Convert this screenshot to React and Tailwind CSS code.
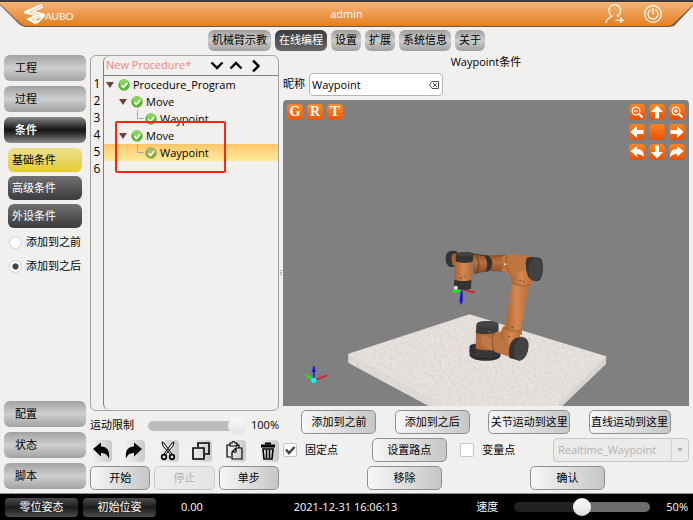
import React, { useState } from "react";

const topTabs = ["机械臂示教", "在线编程", "设置", "扩展", "系统信息", "关于"];

const SideButton = ({ label, active }) => (
  <button
    className={`h-[26px] w-full rounded-md pl-[11px] text-left ${
      active
        ? "bg-linear-to-b from-[#8c8c8c] via-[#141414] to-[#8c8c8c] font-bold text-white"
        : "bg-linear-to-b from-[#a2a2a2] via-[#cfcfcf] to-[#a2a2a2]"
    }`}
  >
    {label}
  </button>
);

const SubButton = ({ label, active }) => (
  <button
    className={`h-6 rounded-md pl-1 text-left ${
      active
        ? "bg-linear-to-b from-[#ebe08c] to-[#e4cd25]"
        : "bg-linear-to-b from-[#717173] to-[#3c3c3e] text-white"
    }`}
  >
    {label}
  </button>
);

const ActionButton = ({ label, className = "", disabled = false }) => (
  <button
    disabled={disabled}
    className={`h-6 rounded-[5px] border border-[#8f8f8b] bg-linear-to-r from-[#f7f7f7] to-[#c6c6c6] text-center whitespace-nowrap disabled:border-[#c9c9c7] disabled:from-[#eeeeed] disabled:to-[#e4e4e3] disabled:text-[#b4b4b2] ${className}`}
  >
    {label}
  </button>
);

const Logo = () => (
  <svg viewBox="0 0 62 66" className="h-[22px] w-[21px]" fill="none">
    <path d="M55 8L12 27L50 36L20 49L38 59" stroke="white" strokeWidth="13" />
    <path d="M48 36L58 40L38 60" stroke="white" strokeWidth="6" />
    <path d="M55 9L16 27L44 35M45 39L24 49L35 56" stroke="#f0a35a" strokeWidth="2" />
  </svg>
);

const Header = () => (
  <header className="relative h-[27px] border-t-2 border-[#3f3d3a]">
    <div className="absolute inset-0 bg-[#6b5a48] [clip-path:polygon(0_0,100%_0,100%_4px,calc(100%-19px)_24px,calc(100%-24px)_100%,25px_100%,20px_23px,0_3px)]">
      <div className="h-6 bg-linear-to-b from-[#f6b473] to-[#e47f1c] [clip-path:polygon(0_0,100%_0,100%_3px,calc(100%-20px)_22px,calc(100%-24px)_100%,25px_100%,21px_22px,0_2px)]" />
    </div>
    <div className="relative grid h-6 grid-cols-3 items-center text-white">
      <div className="flex items-center pl-6">
        <Logo />
        <span className="pt-1 font-['Lato'] text-[10px] leading-3">AUBO</span>
      </div>
      <span className="text-center">admin</span>
      <div className="flex justify-end gap-[18px] pr-[30px]">
        <button aria-label="切换用户">
          <svg viewBox="0 0 20 20" className="h-5 w-5" fill="none" stroke="white" strokeWidth="1.2">
            <path d="M7.3 12.2C4.4 10.8 3.8 8.3 3.8 6.3a5.9 5.6 0 0 1 11.8 0c0 2.6-1.5 4.5-3.3 5.5l1.4 1.2M7.3 12.2C3 13.7 1.5 15.5 1 19M10.5 16.3h7M15 13.8l3 2.5-3 2.5" />
          </svg>
        </button>
        <button aria-label="关机">
          <svg viewBox="0 0 20 20" className="h-5 w-5" fill="none" stroke="white">
            <circle cx="10" cy="10" r="8.3" strokeWidth="1.2" />
            <path d="M7.5 5.7a5 5 0 1 0 5 0M10 4v6.5" strokeWidth="1.3" />
          </svg>
        </button>
      </div>
    </div>
  </header>
);

const CheckDot = ({ faded }) => (
  <svg viewBox="0 0 12 12" className="h-3 w-3">
    <circle cx="6" cy="6" r="5.7" fill={faded ? "#8fa83c" : "#55b82c"} />
    <ellipse cx="6" cy="3.6" rx="4.3" ry="3" fill={faded ? "#b0b865" : "#8ad45e"} />
    <path d="M3.2 6.2l2.2 2.3 3.8-4.4" fill="none" stroke="white" strokeWidth="1.7" />
  </svg>
);

const Arrow = () => (
  <svg viewBox="0 0 8 6" className="h-[6px] w-2">
    <path d="M0 0h8L4 6z" fill="#6b443c" />
  </svg>
);

const Elbow = () => (
  <svg viewBox="0 0 8 17" className="h-[17px] w-2" fill="none" stroke="#a9a9a7">
    <path d="M1.5 0v8.5H8" />
  </svg>
);

const rows = [
  { label: "Procedure_Program", depth: 0 },
  { label: "Move", depth: 1 },
  { label: "Waypoint", depth: 2 },
  { label: "Move", depth: 1 },
  { label: "Waypoint", depth: 2, selected: true },
];

const indents = ["pl-[2px]", "pl-[15px]", "pl-8"];

const moves = [
  { name: "下移", d: "M1.5 3.5L7 9l5.500-5.500" },
  { name: "上移", d: "M1.5 9.5L7 4l5.500 5.500" },
  { name: "展开", d: "M5 1.5L10.5 7 5 12.5" },
];

const ProcedureTree = () => (
  <div className="relative flex flex-1 rounded-md border border-[#a3a3a1]">
    <ol className="w-3 pt-[19px] text-center text-xs">
      {[1, 2, 3, 4, 5, 6].map((n) => (
        <li key={n} className="h-[17px] leading-[17px]">
          {n}
        </li>
      ))}
    </ol>
    <div className="flex-1 rounded-md border-l border-[#80807e]">
      <div className="flex h-5 items-center border-b border-[#80807e] pr-4 pl-[2px]">
        <span className="flex-1 text-[#f78383]">New Procedure*</span>
        <div className="flex gap-[5px]">
          {moves.map(({ name, d }) => (
            <button key={name} aria-label={name}>
              <svg viewBox="0 0 14 14" className="h-[14px] w-[14px]" fill="none" stroke="black" strokeWidth="2.4">
                <path d={d} />
              </svg>
            </button>
          ))}
        </div>
      </div>
      <div className="relative">
        {rows.map(({ label, depth, selected }, i) => (
          <div
            key={i}
            className={`flex h-[17px] items-center ${indents[depth]} ${
              selected ? "bg-linear-to-b from-[#fdc56a] via-[#fed986] to-[#feea94]" : ""
            }`}
          >
            {depth === 2 ? <Elbow /> : <Arrow />}
            <span className={depth === 2 ? "mr-[3px] ml-px" : "mr-[3px] ml-1"}>
              <CheckDot faded={selected} />
            </span>
            <span className="leading-4">{label}</span>
          </div>
        ))}
        <div className="absolute top-[45px] left-[11px] h-[52px] w-[111px] rounded-xs border-2 border-[#ff2412]" />
      </div>
    </div>
    {/* splitter grip */}
    <div className="absolute top-[214px] -right-1 flex flex-col gap-px">
      <i className="h-px w-[2px] bg-[#aaa]" />
      <i className="h-px w-[2px] bg-[#aaa]" />
      <i className="h-px w-[2px] bg-[#aaa]" />
    </div>
  </div>
);

const curvedArrow = "M3 9L11 2.5v4c6 0 9 4 8 12.5-1-4-4-6-8-6v3.5z";

const tools = [
  {
    name: "撤销",
    icon: <path d={curvedArrow} fill="black" />,
  },
  {
    name: "重做",
    icon: <path d={curvedArrow} fill="black" transform="matrix(-1 0 0 1 22 0)" />,
  },
  {
    name: "剪切",
    icon: (
      <g fill="none" stroke="black">
        <path d="M5 2l1 4 8 9 1-1L7 3zM17 2l-1 4-8 9-1-1 8-11z" fill="#eee" />
        <circle cx="7" cy="17" r="2.3" strokeWidth="1.7" />
        <circle cx="15" cy="17" r="2.3" strokeWidth="1.7" />
      </g>
    ),
  },
  {
    name: "复制",
    icon: (
      <path d="M8 7V3h11v11h-4M3 8h11v11H3z" fill="none" stroke="black" strokeWidth="1.6" />
    ),
  },
  {
    name: "粘贴",
    icon: (
      <g fill="none" stroke="black" strokeWidth="1.2">
        <path d="M7 17H3V5h3M12 5h3v3M6 3h2c0-2 3-2 3 0h2v3H6z" />
        <path d="M12 8h6v11H8v-7zM12 8v4H8" />
      </g>
    ),
  },
  {
    name: "删除",
    icon: (
      <g fill="none" stroke="black">
        <path d="M4 6h14" strokeWidth="3" />
        <path d="M8 3.5h6" strokeWidth="2" />
        <path d="M6 9l1 10h8l1-10zM9.5 10v8M12.5 10v8" strokeWidth="1.6" />
      </g>
    ),
  },
];

const thumb =
  "[&::-webkit-slider-thumb]:h-[18px] [&::-webkit-slider-thumb]:w-[18px] [&::-webkit-slider-thumb]:appearance-none [&::-webkit-slider-thumb]:rounded-full [&::-webkit-slider-thumb]:bg-linear-to-b";

const EditorColumn = () => (
  <section className="flex w-[189px] shrink-0 flex-col">
    <ProcedureTree />
    <div className="flex h-[29px] items-center">
      <label htmlFor="limit" className="w-[58px] shrink-0">
        运动限制
      </label>
      <input
        id="limit"
        type="range"
        defaultValue="100"
        className={`mr-1 h-[10px] w-[98px] appearance-none rounded-full bg-[#bdbdbd] [&::-webkit-slider-thumb]:from-[#fafafa] [&::-webkit-slider-thumb]:to-[#e2e2e2] ${thumb}`}
      />
      <span className="flex-1 text-right">100%</span>
    </div>
    <div className="mb-1 flex justify-between">
      {tools.map(({ name, icon }) => (
        <button
          key={name}
          aria-label={name}
          className="rounded-sm bg-linear-to-r from-[#f4f4f3] to-[#c9c9c9]"
        >
          <svg viewBox="0 0 22 22" className="h-[22px] w-[22px]">
            {icon}
          </svg>
        </button>
      ))}
    </div>
    <div className="grid grid-cols-3 gap-1">
      <ActionButton label="开始" />
      <ActionButton label="停止" disabled />
      <ActionButton label="单步" />
    </div>
  </section>
);

const Robot = () => (
  <svg
    viewBox="-171 -390 1221 918"
    preserveAspectRatio="xMidYMid slice"
    className="absolute inset-0 h-full w-full"
  >
    <defs>
      <filter id="grain" x="0" y="0" width="100%" height="100%">
        <feTurbulence type="fractalNoise" baseFrequency="0.12" numOctaves="2" seed="4" />
        <feColorMatrix values="0 0 0 0 .5  0 0 0 0 .46  0 0 0 0 .44  .7 0 0 0 -.27" />
        <feComposite in2="SourceGraphic" operator="in" result="noise" />
        <feMerge>
          <feMergeNode in="SourceGraphic" />
          <feMergeNode in="noise" />
        </feMerge>
      </filter>
      <linearGradient id="tube" x1="0" x2="1" y1="0" y2="0">
        <stop offset="0" stopColor="#a9632f" />
        <stop offset=".5" stopColor="#d68850" />
        <stop offset="1" stopColor="#b46c38" />
      </linearGradient>
      <linearGradient id="tubeDown" x1="0" x2="0" y1="0" y2="1">
        <stop offset="0" stopColor="#8f5228" />
        <stop offset=".4" stopColor="#b97040" />
        <stop offset="1" stopColor="#7c4724" />
      </linearGradient>
    </defs>

    {/* table */}
    <g filter="url(#grain)">
      <path d="M390 253L800 379L798 403L650 545H300L27 398V371z" fill="#e8e2df" />
      <path d="M27 371V398L300 545H345z" fill="#e2dcd8" />
      <path d="M800 379L798 403L650 545H635z" fill="#dcd6d1" />
    </g>

    {/* base */}
    <path d="M390 350C390 335 482 335 483 362V378C480 398 394 398 390 374z" fill="#2e2e2e" />
    <path d="M390 362C396 384 476 386 483 366" fill="none" stroke="#454545" strokeWidth="3" />
    <path d="M404 350L407 370C420 380 455 379 466 370V350z" fill="#383838" />
    <path d="M409 303H475V350C465 363 420 363 409 355z" fill="#b06a38" />
    <path d="M425 315L475 330V350L455 362L425 345z" fill="#c0774a" />
    <path d="M411 282C413 270 474 270 477 282V302C472 314 418 314 409 308z" fill="#3b3b3b" />
    <ellipse cx="444" cy="282" rx="32" ry="9" fill="#454545" />

    {/* shoulder */}
    <path d="M470 305C452 310 452 360 466 366L512 381L548 330L500 304z" fill="#bd7441" />
    <path d="M470 305C456 315 454 350 466 366" fill="none" stroke="#6d4021" strokeWidth="2" />
    <path d="M482 318C488 298 486 290 496 288L538 291C550 297 548 312 547 322L510 346z" fill="url(#tube)" />
    <path d="M527 325C547 318 564 322 567 340C567 368 556 389 541 392L510 384C505 360 510 336 527 325z" fill="#343434" />
    <ellipse cx="545" cy="357" rx="21" ry="35" fill="#434343" transform="rotate(12 545 357)" />

    {/* upper arm */}
    <path d="M518 155L570 160L544 298C530 306 504 303 496 296z" fill="url(#tube)" />
    <path d="M496 294C508 305 534 307 545 297" fill="none" stroke="#965b32" strokeWidth="2" />

    {/* forearm */}
    <path d="M398 74L452 76L500 74L510 125L450 123L402 132z" fill="url(#tubeDown)" />
    <path d="M412 80C420 95 420 115 411 130" fill="none" stroke="#42291a" strokeWidth="2" />
    <path d="M432 75L448 78C462 88 462 112 447 123L436 126C446 110 446 90 432 75z" fill="#333" />
    <path d="M400 72L445 78" stroke="#47321f" strokeWidth="3" />

    {/* elbow */}
    <path d="M485 84C500 70 540 70 575 80L582 155L572 166C555 171 530 167 516 158V139C505 128 490 126 484 121C494 108 494 98 485 84z" fill="#bf7540" />
    <path d="M503 78C496 95 500 118 514 134" fill="none" stroke="#7b4925" strokeWidth="2" />
    <path d="M514 137C530 125 545 120 560 124L577 154L572 166C552 172 530 166 516 158z" fill="url(#tube)" />
    <path d="M520 160C538 168 558 170 573 162" fill="none" stroke="#8f552c" strokeWidth="2" />
    <path d="M562 83C575 79 600 80 606 88C614 105 611 137 599 152C585 155 572 149 566 139C558 120 557 96 562 83z" fill="#353535" />
    <ellipse cx="588" cy="118" rx="21" ry="35" fill="#424242" transform="rotate(8 588 118)" />

    {/* wrist */}
    <path d="M326 66C336 60 350 62 354 66V110L332 111C316 105 314 76 326 66z" fill="#333" />
    <path d="M338 73L352 70V108L342 108C336 98 335 84 338 73z" fill="#a8632f" />
    <path d="M347 92H398L396 155H345z" fill="url(#tube)" />
    <path d="M349 72C357 64 396 64 402 71L400 94C388 101 360 100 349 94z" fill="#333" />
    <ellipse cx="376" cy="73" rx="26" ry="6" fill="#424242" />
    <path d="M344 149C360 154 382 154 396 150L394 177C380 182 352 180 343 174z" fill="#333" />
    <g fill="#3a2416">
      <circle cx="374" cy="139" r="2" />
      <circle cx="364" cy="144" r="2" />
      <circle cx="542" cy="152" r="2" />
      <circle cx="552" cy="154" r="2" />
      <circle cx="518" cy="292" r="2" />
      <circle cx="508" cy="319" r="2" />
      <circle cx="436" cy="307" r="2" />
    </g>
    <circle cx="450" cy="305" r="2" fill="#e48b4a" />
    <circle cx="497" cy="103" r="3" fill="white" />
    <circle cx="544" cy="317" r="3" fill="white" />

    {/* tool axes */}
    <path d="M335 184L347 178L366 180V184L349 188z" fill="#0f0" />
    <path d="M371 179L406 184L405 190L384 185z" fill="#e11" />
    <path d="M363 181h8" stroke="#d0d" strokeWidth="3" />
    <path d="M364 183H369L370 213L365 226L360 213z" fill="#1111e8" />
    <circle cx="349" cy="173" r="6" fill="#eee" />

    {/* world axes */}
    <path d="M-77 452V410" stroke="#1111e8" strokeWidth="4" />
    <path d="M-83 426L-77 405L-71 426z" fill="#1111e8" />
    <path d="M-77 450L-102 435" stroke="#0f0" strokeWidth="5" />
    <path d="M-72 450L-37 436" stroke="#e11" strokeWidth="5" />
    <circle cx="-77" cy="451" r="8" fill="#0ff" />
  </svg>
);

const straightArrow = "M1.5 8L8 2v4h6.5v4H8v4z";
const bentArrow = "M1.5 7L8 2v3c5 0 7 3 7 8-2-2-4-3-7-3v3z";

const zoomGlyph = (plus) => (
  <g fill="none" stroke="white">
    <circle cx="7" cy="7" r="3.8" strokeWidth="1.3" />
    <path d="M10 10l3.5 3.5" strokeWidth="2" />
    <path d={plus ? "M5 7h4M7 5v4" : "M5 7h4"} strokeWidth="1.2" />
  </g>
);

const viewControls = [
  { name: "缩小", icon: zoomGlyph(false) },
  { name: "上", icon: <path d={straightArrow} transform="rotate(90 8 8)" /> },
  { name: "放大", icon: zoomGlyph(true) },
  { name: "左", icon: <path d={straightArrow} /> },
  { name: "复位", icon: null },
  { name: "右", icon: <path d={straightArrow} transform="rotate(180 8 8)" /> },
  { name: "左转", icon: <path d={bentArrow} /> },
  { name: "下", icon: <path d={straightArrow} transform="rotate(270 8 8)" /> },
  { name: "右转", icon: <path d={bentArrow} transform="matrix(-1 0 0 1 16 0)" /> },
];

const RobotView = () => (
  <div className="relative flex-1 overflow-hidden rounded-t-sm bg-[#808080]">
    <Robot />
    <div className="absolute top-1 left-1 flex gap-1">
      {["G", "R", "T"].map((letter) => (
        <button
          key={letter}
          className="h-4 w-4 rounded-sm bg-linear-to-b from-[#f98c26] to-[#ee5507] text-center font-['Liberation_Serif'] text-sm leading-4 font-bold text-white"
        >
          {letter}
        </button>
      ))}
    </div>
    <div className="absolute top-1 right-1 grid grid-cols-3 gap-1">
      {viewControls.map(({ name, icon }) => (
        <button
          key={name}
          aria-label={name}
          className="h-4 w-4 rounded-sm bg-linear-to-b from-[#f98422] to-[#ea4f04]"
        >
          <svg viewBox="0 0 16 16" className="h-4 w-4" fill="white">
            {icon}
          </svg>
        </button>
      ))}
    </div>
  </div>
);

const Check = ({ label, checked = false }) => (
  <label className="flex items-center gap-2">
    <span className="relative flex h-[14px] w-[14px]">
      <input
        type="checkbox"
        defaultChecked={checked}
        className="peer h-[14px] w-[14px] appearance-none rounded-xs border border-[#c4c4c2] bg-white"
      />
      <svg
        viewBox="0 0 14 14"
        className="pointer-events-none absolute inset-0 hidden peer-checked:block"
        fill="none"
        stroke="#444"
        strokeWidth="2.5"
      >
        <path d="M3 6.5l3 3.5 5.500-6" />
      </svg>
    </span>
    {label}
  </label>
);

const WaypointPanel = () => {
  const [name, setName] = useState("Waypoint");

  return (
    <section className="flex flex-1 flex-col">
      <h1 className="h-[18px] text-center leading-[14px]">Waypoint条件</h1>
      <div className="mb-1 flex items-center gap-1">
        <label htmlFor="nickname">昵称</label>
        <div className="relative flex">
          <input
            id="nickname"
            value={name}
            onChange={(e) => setName(e.target.value)}
            className="h-[23px] w-[134px] rounded-sm border border-[#b5b5b3] bg-white pr-4 pl-[2px]"
          />
          <button
            aria-label="清除"
            className="absolute top-2 right-1"
            onClick={() => setName("")}
          >
            <svg viewBox="0 0 10 8" className="h-2 w-[10px]" fill="none" stroke="#555">
              <path d="M3 .5h6.5v7H3L.5 4zM4 2l4 4M8 2L4 6" />
            </svg>
          </button>
        </div>
      </div>
      <RobotView />
      <div className="mt-1 flex justify-evenly">
        <ActionButton label="添加到之前" className="w-[75px]" />
        <ActionButton label="添加到之后" className="w-[75px]" />
        <ActionButton label="关节运动到这里" className="w-[82px]" />
        <ActionButton label="直线运动到这里" className="w-[82px]" />
      </div>
      <div className="mt-1 flex items-center justify-between">
        <Check label="固定点" checked />
        <ActionButton label="设置路点" className="ml-5 w-[75px]" />
        <Check label="变量点" />
        <div className="relative ml-6 flex">
          <select
            disabled
            aria-label="变量"
            className="h-6 w-[136px] appearance-none rounded-sm border border-[#c6c6c4] bg-[#ebebea] pl-1 text-[#b3b3b1]"
          >
            <option>Realtime_Waypoint</option>
          </select>
          <span className="pointer-events-none absolute inset-y-0 right-0 flex w-[18px] items-center justify-center border-l border-[#d2d2d0]">
            <svg viewBox="0 0 6 4" className="h-1 w-[6px]">
              <path d="M0 0h6L3 4z" fill="#b0b0ae" />
            </svg>
          </span>
        </div>
      </div>
      <div className="mt-1 flex justify-around px-10">
        <ActionButton label="移除" className="w-[75px]" />
        <ActionButton label="确认" className="w-[75px]" />
      </div>
    </section>
  );
};

const Sidebar = () => {
  const [position, setPosition] = useState("添加到之后");

  return (
    <aside className="flex w-[82px] shrink-0 flex-col justify-between pb-px">
      <div className="flex flex-col gap-[5px]">
        <SideButton label="工程" />
        <SideButton label="过程" />
        <SideButton label="条件" active />
        <div className="flex flex-col gap-1 px-1">
          <SubButton label="基础条件" active />
          <SubButton label="高级条件" />
          <SubButton label="外设条件" />
          {["添加到之前", "添加到之后"].map((option) => (
            <label key={option} className="flex h-5 items-center gap-1 pl-px">
              <input
                type="radio"
                name="position"
                checked={position === option}
                onChange={() => setPosition(option)}
                className="h-[13px] w-[13px] shrink-0 appearance-none rounded-full border border-[#cfcfcd] bg-white checked:bg-radial checked:from-[#444] checked:from-35% checked:to-white checked:to-45%"
              />
              <span className="whitespace-nowrap">{option}</span>
            </label>
          ))}
        </div>
      </div>
      <div className="flex flex-col gap-[5px]">
        <SideButton label="配置" />
        <SideButton label="状态" />
        <SideButton label="脚本" />
      </div>
    </aside>
  );
};

const Footer = () => (
  <footer className="flex h-[27px] items-center border-t border-[#8b938c] bg-black px-[5px] text-white">
    <div className="flex gap-[5px]">
      {["零位姿态", "初始位姿"].map((label) => (
        <button
          key={label}
          className="h-[19px] w-[73px] rounded-sm bg-linear-to-b from-[#4c4c4c] via-[#1c1c1c] to-[#4c4c4c]"
        >
          {label}
        </button>
      ))}
    </div>
    <span className="ml-[25px]">0.00</span>
    <span className="flex-1 pl-3 text-center">2021-12-31 16:06:13</span>
    <label htmlFor="speed" className="mr-4">
      速度
    </label>
    <input
      id="speed"
      type="range"
      defaultValue="50"
      className={`h-[10px] w-[136px] appearance-none rounded-full bg-linear-to-r from-[#222] from-50% to-[#6c6c6c] to-50% [&::-webkit-slider-thumb]:from-white [&::-webkit-slider-thumb]:to-[#ddd] ${thumb}`}
    />
    <span className="ml-4">50%</span>
  </footer>
);

const App = () => {
  const [tab, setTab] = useState("在线编程");

  return (
    <div className="flex min-h-screen flex-col bg-[#f1f0ee] font-['Open_Sans','Noto_Sans_CJK_SC',sans-serif] text-[11px] text-black">
      <Header />
      <nav className="mt-[3px] mb-1 flex justify-center gap-1">
        {topTabs.map((label) => (
          <button
            key={label}
            onClick={() => setTab(label)}
            className={`h-[21px] rounded-md px-1 ${
              tab === label
                ? "bg-linear-to-b from-[#3c3c3c] to-[#686868] text-white"
                : "bg-linear-to-b from-[#a0a0a0] via-[#cccccc] to-[#a0a0a0]"
            }`}
          >
            {label}
          </button>
        ))}
      </nav>
      <main className="flex flex-1 gap-1 px-1 pb-[3px]">
        <Sidebar />
        <EditorColumn />
        <WaypointPanel />
      </main>
      <Footer />
    </div>
  );
};

export default App;
